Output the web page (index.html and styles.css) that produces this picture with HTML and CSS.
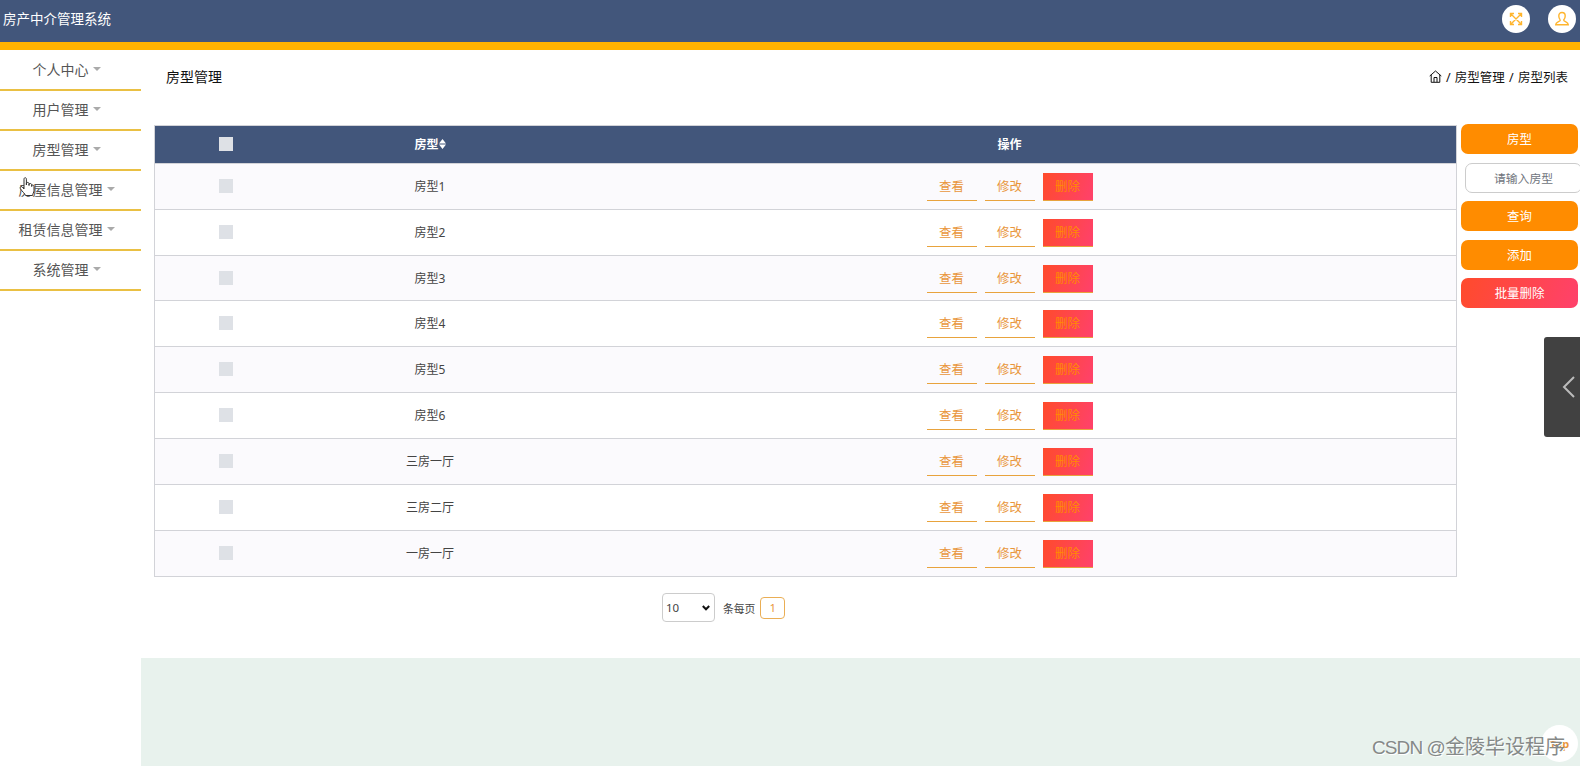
FILE: index.html
```html
<!DOCTYPE html>
<html lang="zh-CN">
  <head>
    <meta charset="utf-8">
    <title>房产中介管理系统</title>
    <link rel="stylesheet" href="styles.css">
  </head>
  <body>
    <header class="topbar">
      <span class="brand">房产中介管理系统</span>
      <a class="round" href="#">
        <svg width="16" height="16" viewBox="0 0 16 16"><path d="M2.500 6V2.500H6M2.500 2.500l11 11M10 13.500h3.500V10M10 2.500h3.500V6M13.500 2.500l-11 11M2.500 10v3.500H6"/></svg>
      </a>
      <a class="round" href="#">
        <svg width="16" height="16" viewBox="0 0 16 16"><path d="M6.300 9C5.200 7.800 4.800 6.500 4.800 5C4.800 2.700 6 1.500 8 1.500s3.200 1.200 3.200 3.500C11.200 6.500 10.800 7.800 9.700 9C9.700 10.800 14.300 10.500 14.300 13.700H1.700C1.700 10.500 6.300 10.800 6.300 9"/></svg>
      </a>
    </header>

    <div class="layout">
      <nav class="sidebar">
        <a href="#">个人中心<i class="caret"></i></a>
        <a href="#">用户管理<i class="caret"></i></a>
        <a href="#">房型管理<i class="caret"></i></a>
        <a href="#">房屋信息管理<i class="caret"></i></a>
        <a href="#">租赁信息管理<i class="caret"></i></a>
        <a href="#">系统管理<i class="caret"></i></a>
      </nav>

      <main class="content">
        <div class="page">
          <div class="page-head">
            <h1>房型管理</h1>
            <div class="breadcrumb">
              <svg width="13" height="13" viewBox="0 0 13 13"><path d="M.7 6L6.500 1l5.800 5M2.200 5v7.300h8.600V5M5 12V7.500h3V12"/></svg>
              <span>/ 房型管理 / 房型列表</span>
            </div>
          </div>

          <div class="columns">
            <div class="list">
              <table>
                <thead>
                  <tr>
                    <th class="col-check"><i class="box"></i></th>
                    <th class="col-name"><span class="sort">房型<svg width="7" height="10" viewBox="0 0 7 10"><path d="M0 4.500L3.500 0L7 4.500zM0 5.500h7L3.500 10z"/></svg></span></th>
                    <th>操作</th>
                  </tr>
                </thead>
                <tbody id="rows"></tbody>
              </table>
              <div class="pager">
                <div class="select"><span>10</span><svg width="8" height="6" viewBox="0 0 8 6"><path d="M.8 1L4 4.300L7.200 1"/></svg></div>
                <span class="per">条每页</span>
                <a class="num" href="#">1</a>
              </div>
            </div>

            <div class="tools">
              <button>房型</button>
              <input type="text" placeholder="请输入房型">
              <button>查询</button>
              <button>添加</button>
              <button class="danger">批量删除</button>
            </div>
          </div>
        </div>
      </main>
    </div>

    <div class="drawer">
      <svg width="14" height="22" viewBox="0 0 14 22"><path d="M12 1L2 11l10 10"/></svg>
    </div>
    <a class="to-top" href="#">Top</a>
    <div class="watermark"><span>CSDN @</span>金陵毕设程序</div>
    <svg class="pointer" width="18" height="20" viewBox="0 0 18 20"><path d="M5 12V2.200C5 .2 7.400 .2 7.400 2.200V8V6C8 5 9.800 5.300 10 6.500V8.500V7C11 6 12.500 6.500 12.700 7.700V9.500V8.500C13.700 7.500 15 8.300 15 9.500V13.500C15 15.500 13.500 17 13.500 18.500H6.500C6 16.500 3 14.500 1.300 11.500C.7 9.700 2.500 9 3.500 10.300z"/></svg>

    <script>
      const names = ["房型1", "房型2", "房型3", "房型4", "房型5", "房型6", "三房一厅", "三房二厅", "一房一厅"];

      document.getElementById("rows").innerHTML = names.map(name => `
        <tr>
          <td><i class="box"></i></td>
          <td>${name}</td>
          <td>
            <div class="actions">
              <a href="#">查看</a>
              <a href="#">修改</a>
              <a href="#" class="del">删除</a>
            </div>
          </td>
        </tr>`).join("");
    </script>
  </body>
</html>
```

FILE: styles.css
```css
* {
  box-sizing: border-box;
}

body {
  margin: 0;
  height: 766px;
  overflow: hidden;
  background: #fff;
  color: #444;
  font-family: "Noto Sans", "Noto Sans CJK SC", sans-serif;
  font-size: 12px;
}

a {
  color: inherit;
  text-decoration: none;
}

svg {
  fill: none;
  stroke: currentColor;
}

.topbar {
  display: flex;
  align-items: center;
  gap: 18px;
  height: 50px;
  padding: 0 4px 5px 3px;
  background: #42567b;
  border-bottom: 8px solid #ffb300;
}

.brand {
  flex: 1;
  padding-bottom: 1px;
  color: #fff;
  font-size: 13.500px;
}

.round {
  display: flex;
  align-items: center;
  justify-content: center;
  width: 28px;
  height: 28px;
  border-radius: 50%;
  background: #fff;
  color: #ffb52e;
}

.round svg {
  stroke-width: 1.400;
}

.layout {
  display: flex;
  height: 716px;
}

.sidebar {
  width: 141px;
}

.sidebar a {
  display: flex;
  align-items: center;
  justify-content: center;
  height: 40px;
  padding: 0 12px 2px 0;
  border-bottom: 2px solid #eac043;
  color: #555;
  font-size: 14px;
}

.sidebar a:first-child {
  height: 41px;
}

.caret {
  margin: 0 -4px 0 4px;
  border: 4px solid transparent;
  border-top-color: #aaa;
  border-bottom: 0;
}

.content {
  flex: 1;
  background: #e8f2ed;
}

.page {
  height: 608px;
  background: #fff;
}

.page-head {
  display: flex;
  align-items: center;
  justify-content: space-between;
  height: 54px;
  padding: 0 12px 2px 25px;
  color: #111;
}

.page-head h1 {
  margin: 0;
  font-size: 14px;
  font-weight: normal;
}

.breadcrumb {
  display: flex;
  align-items: center;
  gap: 4px;
  font-size: 12.500px;
  word-spacing: 1px;
}

.columns {
  display: flex;
  gap: 4px;
  padding: 20px 0 0 13px;
}

.list {
  width: 1303px;
  padding-top: 1px;
}

table {
  width: 100%;
  table-layout: fixed;
  border: 1px solid #d2d3d8;
  border-bottom: 0;
  border-spacing: 0;
}

th,
td {
  height: 46px;
  padding: 0 0 1px;
  border-bottom: 1px solid #d2d3d8;
  text-align: center;
}

th {
  height: 38px;
  background: #42567b;
  color: #fff;
}

.col-check {
  width: 142px;
}

.col-name {
  width: 266px;
}

tbody tr:nth-child(odd) {
  background: #fbfafd;
}

tbody tr:nth-child(3) td {
  height: 45px;
}

.box {
  display: block;
  width: 14px;
  height: 14px;
  margin: 0 auto;
  background: #dee1e6;
}

.sort {
  display: inline-flex;
  align-items: center;
}

.sort svg {
  fill: #fff;
  stroke: none;
}

.actions {
  display: flex;
  justify-content: center;
  gap: 8px;
  padding-top: 2px;
}

.actions a {
  width: 50px;
  height: 28px;
  border-bottom: 1px solid #e8a33d;
  color: #e9963c;
  font-size: 12.400px;
  line-height: 28px;
}

.actions .del {
  background: linear-gradient(110deg, #ff4b2b, #ff416c);
  color: #ff8c00;
}

.pager {
  display: flex;
  align-items: center;
  height: 61px;
  padding-left: 508px;
  font-size: 10.800px;
}

.select {
  display: flex;
  align-items: center;
  justify-content: space-between;
  width: 53px;
  height: 29px;
  padding: 0 4px 0 3px;
  border: 1px solid #ccc;
  border-radius: 4px;
  font-size: 11.500px;
}

.select svg {
  color: #111;
  stroke-width: 2;
}

.per {
  margin: 0 5px 0 8px;
}

.num {
  width: 25px;
  height: 22px;
  margin-top: 1px;
  border: 1px solid #eaae55;
  border-radius: 4px;
  color: #e9963c;
  font-size: 11.500px;
  line-height: 20px;
  text-align: center;
}

.tools {
  display: flex;
  flex-direction: column;
  gap: 8.500px;
  width: 117px;
}

.tools button,
.tools input {
  height: 30px;
  padding: 0;
  border: 0;
  border-radius: 7px;
  background: #ff8c00;
  color: #fff;
  font: 12.400px "Noto Sans", "Noto Sans CJK SC", sans-serif;
  text-align: center;
}

.tools input {
  width: 117px;
  margin-left: 4px;
  padding-top: 1px;
  border: 1px solid #ccc;
  background: #fff;
  font-size: 11.800px;
}

.tools input::placeholder {
  color: #70757d;
}

.tools .danger {
  background: linear-gradient(110deg, #ff4b2b, #ff416c);
}

.drawer {
  position: absolute;
  top: 337px;
  right: 0;
  display: flex;
  align-items: center;
  width: 36px;
  height: 100px;
  padding-left: 18px;
  border-radius: 3px 0 0 3px;
  background: #414141;
  color: #bbb;
}

.drawer svg {
  stroke-width: 2;
}

.to-top {
  position: absolute;
  top: 725px;
  right: 2px;
  width: 37px;
  height: 37px;
  border-radius: 50%;
  background: #fff;
  color: #e9963c;
  font-size: 11px;
  font-weight: bold;
  line-height: 38px;
  text-align: center;
}

.watermark {
  position: absolute;
  top: 733px;
  right: 15px;
  color: #858988;
  font: 20px/28px "Liberation Sans", "Noto Sans CJK SC", sans-serif;
  text-shadow: 1px 1px 0 #fff;
  white-space: nowrap;
}

.watermark span {
  font-size: 19px;
  letter-spacing: -.900px;
}

.pointer {
  position: absolute;
  top: 177px;
  left: 19px;
  fill: #fff;
  stroke: #333;
}
```
